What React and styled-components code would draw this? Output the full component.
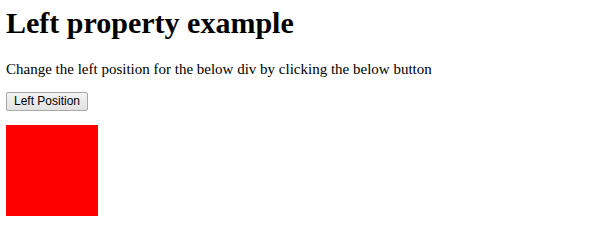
import React from "react";
import styled, { createGlobalStyle } from "styled-components";

const GlobalStyle = createGlobalStyle`
  html, body {
    margin: 0;
    padding: 0;
    background: #ffffff;
  }
  body {
    font-family: "Liberation Serif", "Times New Roman", serif;
    color: #000;
  }
`;

const Page = styled.div`
  padding: 6px 6px 0;
  display: flex;
  flex-direction: column;
  align-items: flex-start;
`;

const Title = styled.h1`
  margin: 0 0 21px;
  font-size: 30px;
  line-height: 34px;
  font-weight: bold;
`;

const Text = styled.p`
  margin: 0 0 14px;
  font-size: 15px;
  line-height: 17px;
`;

const Button = styled.button`
  box-sizing: border-box;
  width: 82px;
  height: 19px;
  padding: 0 6px;
  margin: 0 0 14px;
  font-family: "Liberation Sans", Arial, sans-serif;
  font-size: 12px;
  line-height: 15px;
  color: #000;
  background: linear-gradient(#f4f4f4, #e2e2e2);
  border: 1px solid #a9a9a9;
  border-radius: 2px;
  cursor: pointer;
`;

const Box = styled.div`
  width: 92px;
  height: 91px;
  background: #ff0000;
  position: relative;
`;

export default function App() {
  return (
    <>
      <GlobalStyle />
      <Page>
        <Title>Left property example</Title>
        <Text>Change the left position for the below div by clicking the below button</Text>
        <Button>Left Position</Button>
        <Box />
      </Page>
    </>
  );
}
